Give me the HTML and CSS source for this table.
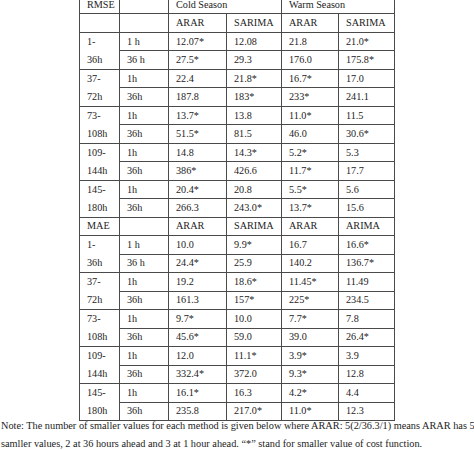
FILE: index.html
```html
<!DOCTYPE html>
<html>
<head>
<meta charset="utf-8">
<link rel="stylesheet" href="styles.css">
</head>
<body>
<table class="tbl">
  <colgroup>
    <col class="c1"><col class="c2"><col class="c3"><col class="c4"><col class="c5"><col class="c6">
  </colgroup>
  <tr><td>RMSE</td><td></td><td colspan="2">Cold Season</td><td colspan="2">Warm Season</td></tr>
  <tr><td></td><td></td><td>ARAR</td><td>SARIMA</td><td>ARAR</td><td>SARIMA</td></tr>
  <tr><td rowspan="2" class="grp">1-<br>36h</td><td>1 h</td><td>12.07*</td><td>12.08</td><td>21.8</td><td>21.0*</td></tr>
  <tr><td>36 h</td><td>27.5*</td><td>29.3</td><td>176.0</td><td>175.8*</td></tr>
  <tr><td rowspan="2" class="grp">37-<br>72h</td><td>1h</td><td>22.4</td><td>21.8*</td><td>16.7*</td><td>17.0</td></tr>
  <tr><td>36h</td><td>187.8</td><td>183*</td><td>233*</td><td>241.1</td></tr>
  <tr><td rowspan="2" class="grp">73-<br>108h</td><td>1h</td><td>13.7*</td><td>13.8</td><td>11.0*</td><td>11.5</td></tr>
  <tr><td>36h</td><td>51.5*</td><td>81.5</td><td>46.0</td><td>30.6*</td></tr>
  <tr><td rowspan="2" class="grp">109-<br>144h</td><td>1h</td><td>14.8</td><td>14.3*</td><td>5.2*</td><td>5.3</td></tr>
  <tr><td>36h</td><td>386*</td><td>426.6</td><td>11.7*</td><td>17.7</td></tr>
  <tr><td rowspan="2" class="grp">145-<br>180h</td><td>1h</td><td>20.4*</td><td>20.8</td><td>5.5*</td><td>5.6</td></tr>
  <tr><td>36h</td><td>266.3</td><td>243.0*</td><td>13.7*</td><td>15.6</td></tr>
  <tr><td>MAE</td><td></td><td>ARAR</td><td>SARIMA</td><td>ARAR</td><td>ARIMA</td></tr>
  <tr><td rowspan="2" class="grp">1-<br>36h</td><td>1 h</td><td>10.0</td><td>9.9*</td><td>16.7</td><td>16.6*</td></tr>
  <tr><td>36 h</td><td>24.4*</td><td>25.9</td><td>140.2</td><td>136.7*</td></tr>
  <tr><td rowspan="2" class="grp">37-<br>72h</td><td>1h</td><td>19.2</td><td>18.6*</td><td>11.45*</td><td>11.49</td></tr>
  <tr><td>36h</td><td>161.3</td><td>157*</td><td>225*</td><td>234.5</td></tr>
  <tr><td rowspan="2" class="grp">73-<br>108h</td><td>1h</td><td>9.7*</td><td>10.0</td><td>7.7*</td><td>7.8</td></tr>
  <tr><td>36h</td><td>45.6*</td><td>59.0</td><td>39.0</td><td>26.4*</td></tr>
  <tr><td rowspan="2" class="grp">109-<br>144h</td><td>1h</td><td>12.0</td><td>11.1*</td><td>3.9*</td><td>3.9</td></tr>
  <tr><td>36h</td><td>332.4*</td><td>372.0</td><td>9.3*</td><td>12.8</td></tr>
  <tr><td rowspan="2" class="grp">145-<br>180h</td><td>1h</td><td>16.1*</td><td>16.3</td><td>4.2*</td><td>4.4</td></tr>
  <tr><td>36h</td><td>235.8</td><td>217.0*</td><td>11.0*</td><td>12.3</td></tr>
</table>
<p class="note">Note: The number of smaller values for each method is given below where ARAR: 5(2/36.3/1) means ARAR has 5<br>samller values, 2 at 36 hours ahead and 3 at 1 hour ahead. “*” stand for smaller value of cost function.</p>
</body>
</html>
```
FILE: styles.css
```css
html, body {
  margin: 0;
  padding: 0;
  background: #fff;
}
body {
  font-family: "Liberation Serif", "Times New Roman", serif;
  color: #1c1c1c;
  overflow: hidden;
}
.tbl {
  border-collapse: collapse;
  table-layout: fixed;
  width: 315px;
  margin: -5px 0 0 79px;
  font-size: 10.2px;
}
.c1 { width: 40px; }
.c2 { width: 49px; }
.c3 { width: 58px; }
.c4 { width: 55px; }
.c5 { width: 57px; }
.c6 { width: 56px; }
.tbl tr { height: 18.4px; }
.tbl td {
  border: 1px solid #4a4a4a;
  padding: 0 0 0 7px;
  line-height: 14px;
  white-space: nowrap;
  vertical-align: middle;
}
.tbl td.grp {
  vertical-align: top;
  line-height: 18px;
}
.note {
  margin: -4px 0 0 1px;
  font-size: 10.3px;
  line-height: 18px;
  white-space: nowrap;
}
```
